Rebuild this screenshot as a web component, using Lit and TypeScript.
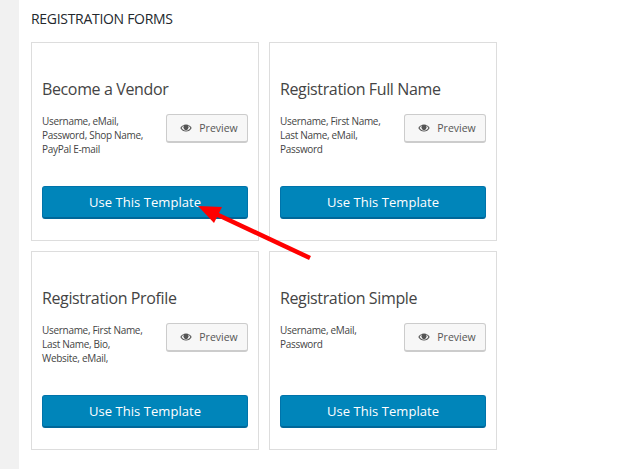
import { LitElement, html, css, svg } from "lit";
import { customElement } from "lit/decorators.js";

const forms = [
  { title: "Become a Vendor", lines: ["Username, eMail,", "Password, Shop Name,", "PayPal E-mail"] },
  { title: "Registration Full Name", lines: ["Username, First Name,", "Last Name, eMail,", "Password"] },
  { title: "Registration Profile", lines: ["Username, First Name,", "Last Name, Bio,", "Website, eMail,"] },
  { title: "Registration Simple", lines: ["Username, eMail,", "Password"] },
];

@customElement("app-root")
export class AppRoot extends LitElement {
  static styles = css`
    :host {
      display: flex;
      position: relative;
      width: 620px;
      height: 469px;
      overflow: hidden;
      background: #fff;
      font-family: "Open Sans", sans-serif;
      color: #444;
    }
    .side { width: 19px; flex: none; background: #f1f1f1; }
    .main { padding: 10px 0 0 12px; }
    .heading { margin: 0 0 14px; height: 18px; font-size: 14px; font-weight: 400; line-height: 18px; color: #23282d; letter-spacing: -0.3px; }
    .grid { display: grid; grid-template-columns: 228px 228px; grid-auto-rows: 199px; gap: 10px; }
    .card {
      box-sizing: border-box;
      border: 1px solid #ddd;
      padding: 34px 10px 0;
      display: flex;
      flex-direction: column;
    }
    h3 { margin: 0; font-size: 16px; line-height: 24px; font-weight: 400; color: #444; letter-spacing: -0.37px; }
    .mid { display: flex; justify-content: space-between; align-items: flex-start; margin-top: 12px; height: 73px; }
    .desc { font-size: 10px; line-height: 14px; color: #444; padding-top: 1px; white-space: nowrap; letter-spacing: -0.3px; }
    .prev {
      box-sizing: border-box;
      width: 82px; height: 29px;
      margin-top: 1px;
      padding-left: 4px;
      background: #f7f7f7;
      border: 1px solid #ccc;
      border-bottom-width: 2px;
      border-radius: 3px;
      font-size: 10.5px;
      color: #555;
      display: flex; align-items: center; justify-content: center; gap: 7px;
    }
    .prev svg { display: block; }
    .use {
      box-sizing: border-box;
      width: 206px; height: 33px;
      background: #0085ba;
      border: 1px solid #0073aa;
      border-bottom: 2px solid #006799;
      border-radius: 3px;
      color: #fff;
      font-size: 13px;
      letter-spacing: 0.06px;
      display: flex; align-items: center; justify-content: center;
    }
    .arrow { position: absolute; left: 0; top: 0; pointer-events: none; }
  `;

  render() {
    return html`
      <div class="side"></div>
      <div class="main">
        <h2 class="heading">REGISTRATION FORMS</h2>
        <div class="grid">
          ${forms.map(
            (f) => html`
              <div class="card">
                <h3>${f.title}</h3>
                <div class="mid">
                  <div class="desc">${f.lines.map((l) => html`${l}<br />`)}</div>
                  <div class="prev">
                    <svg width="12" height="8" viewBox="0 0 12 8">
                      <path d="M0.3 4C1.6 1.6 3.6 0.4 6 0.4S10.4 1.6 11.7 4C10.4 6.4 8.4 7.6 6 7.6S1.6 6.4 0.3 4Z" fill="#555"/>
                      <path d="M1.6 4C2.6 2.5 3.4 1.9 4 1.6A2.6 2.6 0 1 0 8 1.6C8.6 1.9 9.4 2.5 10.4 4C9 5.8 7.6 6.6 6 6.6S3 5.8 1.6 4Z" fill="#f7f7f7"/>
                      <circle cx="6" cy="3.6" r="1.9" fill="#555"/>
                    </svg>
                    <span>Preview</span>
                  </div>
                </div>
                <div class="use">Use This Template</div>
              </div>
            `
          )}
        </div>
      </div>
      <svg class="arrow" width="620" height="469" viewBox="0 0 620 469">
        ${svg`<line x1="216" y1="214" x2="310" y2="258" stroke="#f00" stroke-width="4.5"/>
        <polygon points="198,206 222,207 214,223" fill="#f00"/>`}
      </svg>
    `;
  }
}
